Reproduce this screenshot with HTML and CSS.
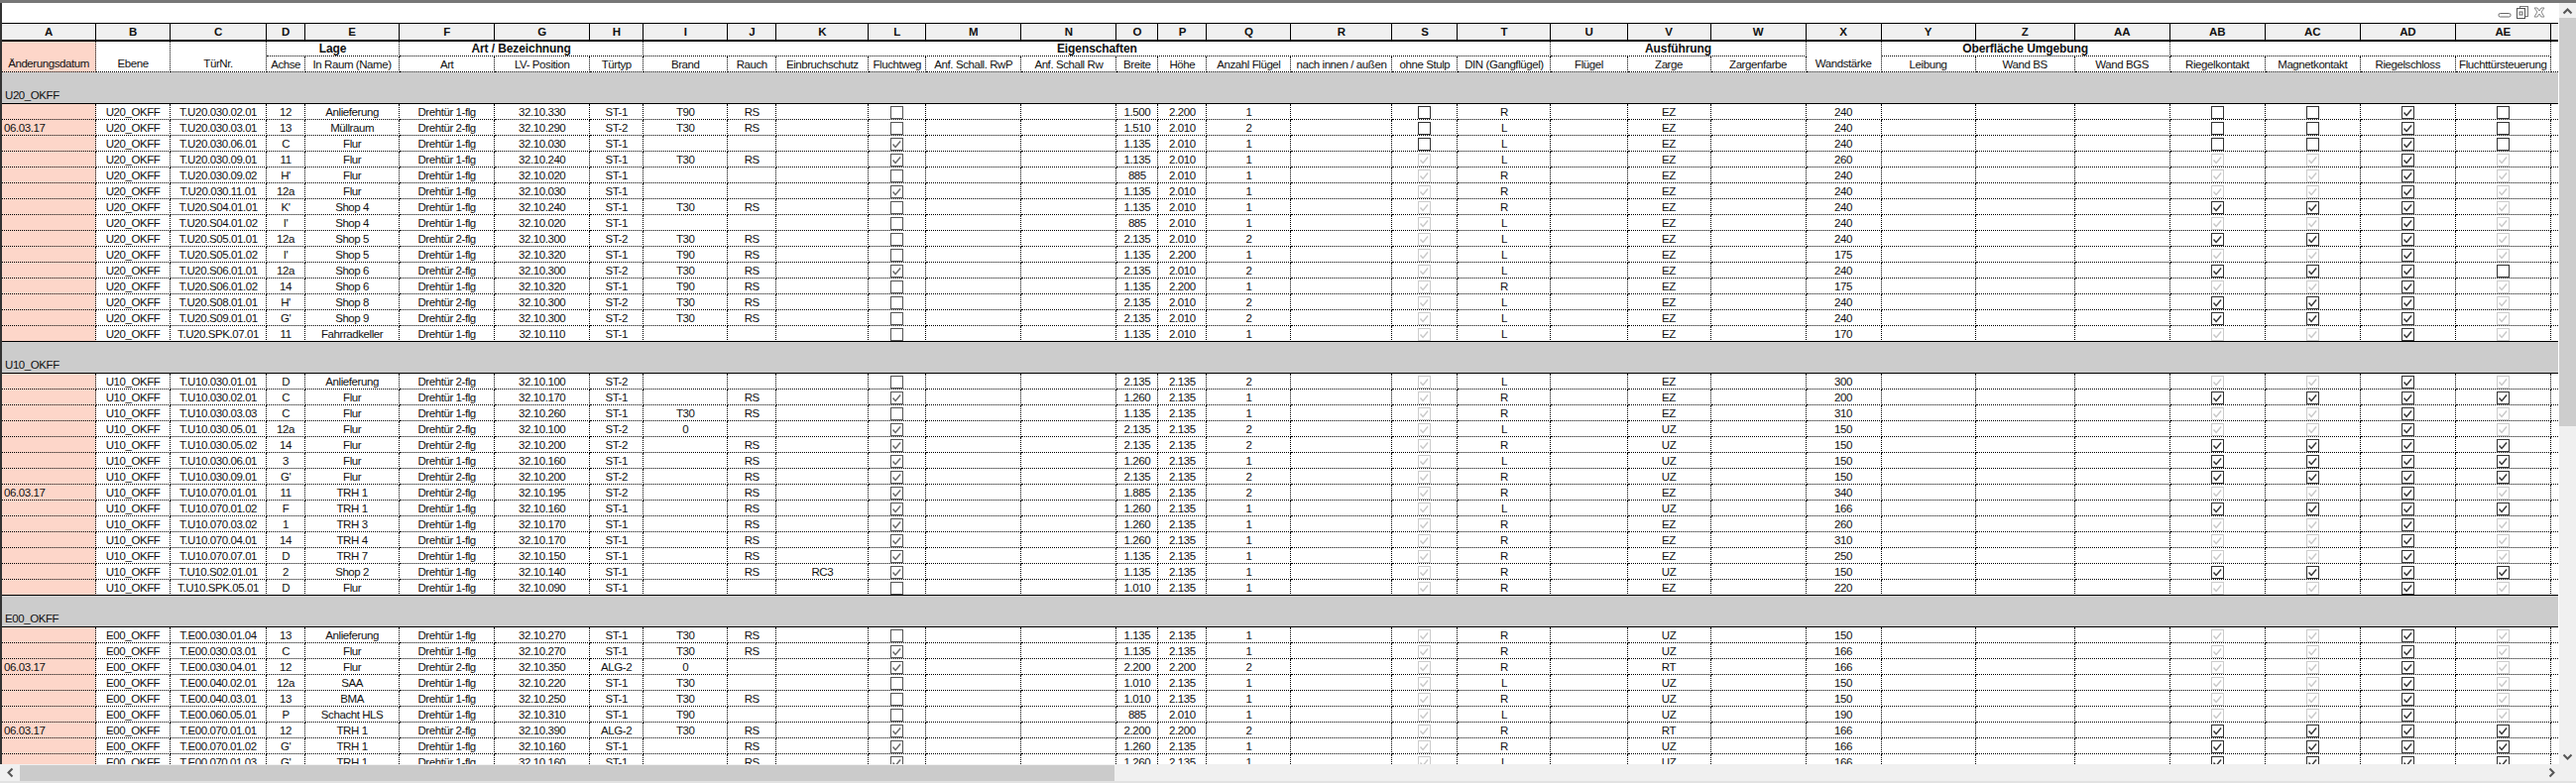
FILE: index.html
```html
<!DOCTYPE html>
<html lang="de">
<head>
<meta charset="utf-8">
<title>Türliste</title>
<link rel="stylesheet" href="styles.css">
</head>
<body>
<div class="window">
  <div class="top">
    <div class="pane">
      <div class="titlebar">
        <svg class="winicons" width="54" height="16" viewBox="0 0 54 16" aria-hidden="true">
          <rect x="1" y="8.5" width="12" height="3.5" rx="1.5" fill="#fff" stroke="#666"/>
          <rect x="22.5" y="1.5" width="8" height="10" fill="#fff" stroke="#777"/>
          <rect x="19.5" y="3.5" width="8" height="10" fill="#fff" stroke="#555"/>
          <rect x="22" y="7" width="3" height="3" fill="none" stroke="#666"/>
          <path d="M37 3l3 0 2 3 2-3 3 0-3 4 3 5-3 0-2-3-2 3-3 0 3-5z" fill="#fff" stroke="#888"/>
        </svg>
      </div>
      <div class="viewport">
        <table class="sheet">
          <colgroup>
            <col><col><col><col><col><col><col><col><col><col><col><col><col><col><col><col>
            <col><col><col><col><col><col><col><col><col><col><col><col><col><col><col><col>
          </colgroup>
          <thead>
            <tr class="letters">
              <th>A</th><th>B</th><th>C</th><th>D</th><th>E</th><th>F</th><th>G</th><th>H</th>
              <th>I</th><th>J</th><th>K</th><th>L</th><th>M</th><th>N</th><th>O</th><th>P</th>
              <th>Q</th><th>R</th><th>S</th><th>T</th><th>U</th><th>V</th><th>W</th><th>X</th>
              <th>Y</th><th>Z</th><th>AA</th><th>AB</th><th>AC</th><th>AD</th><th>AE</th><th class="end"></th>
            </tr>
            <tr class="groups">
              <td rowspan="2" class="date bottom">Änderungsdatum</td>
              <td rowspan="2" class="bottom">Ebene</td>
              <td rowspan="2" class="bottom">TürNr.</td>
              <th colspan="2">Lage</th>
              <th colspan="3">Art / Bezeichnung</th>
              <th colspan="12">Eigenschaften</th>
              <th colspan="3">Ausführung</th>
              <td rowspan="2" class="bottom">Wandstärke</td>
              <th colspan="3">Oberfläche Umgebung</th>
              <th colspan="4"></th>
              <td rowspan="2" class="end"></td>
            </tr>
            <tr class="labels">
              <td>Achse</td><td>In Raum (Name)</td><td>Art</td><td>LV- Position</td><td>Türtyp</td>
              <td>Brand</td><td>Rauch</td><td>Einbruchschutz</td><td>Fluchtweg</td><td>Anf. Schall. RwP</td>
              <td>Anf. Schall Rw</td><td>Breite</td><td>Höhe</td><td>Anzahl Flügel</td><td>nach innen / außen</td>
              <td>ohne Stulp</td><td>DIN (Gangflügel)</td><td>Flügel</td><td>Zarge</td><td>Zargenfarbe</td>
              <td>Leibung</td><td>Wand BS</td><td>Wand BGS</td><td>Riegelkontakt</td><td>Magnetkontakt</td>
              <td>Riegelschloss</td><td>Fluchttürsteuerung</td>
            </tr>
          </thead>
          <tbody id="rows"></tbody>
        </table>
      </div>
    </div>
    <div class="vscroll">
      <div class="vbtn"><svg width="11" height="8" viewBox="0 0 11 8" aria-hidden="true"><path d="M1.5 6.5l4-4 4 4" fill="none" stroke="#555" stroke-width="2"/></svg></div>
      <div class="vthumb"></div>
      <div class="vtrack"></div>
      <div class="vbtn"><svg width="11" height="8" viewBox="0 0 11 8" aria-hidden="true"><path d="M1.5 1.5l4 4 4-4" fill="none" stroke="#555" stroke-width="2"/></svg></div>
    </div>
  </div>
  <div class="hscroll">
    <div class="hbtn"><svg width="8" height="11" viewBox="0 0 8 11" aria-hidden="true"><path d="M6.5 1.5l-4 4 4 4" fill="none" stroke="#555" stroke-width="2"/></svg></div>
    <div class="hthumb"></div>
    <div class="htrack"></div>
    <div class="hbtn"><svg width="8" height="11" viewBox="0 0 8 11" aria-hidden="true"><path d="M1.5 1.5l4 4-4 4" fill="none" stroke="#555" stroke-width="2"/></svg></div>
  </div>
  <div class="foot"></div>
</div>
<script src="app.js"></script>
</body>
</html>
```
FILE: styles.css
```css
* { box-sizing: border-box; }
html, body { margin: 0; padding: 0; background: #fff; }
body { width: 2598px; height: 790px; overflow: hidden; font-family: "Liberation Sans", Arial, sans-serif; color: #111; }
.window { display: flex; flex-direction: column; height: 790px; border-top: 3px solid #777; }
.top { display: flex; height: 768px; }
.pane { width: 2581px; display: flex; flex-direction: column; border-left: 2px solid #333; }
.titlebar { height: 20px; display: flex; justify-content: flex-end; align-items: center; padding-right: 8px; background: #fff; }
.viewport { flex: 1; overflow: hidden; background: #fff; }
.sheet { table-layout: fixed; width: 2578px; border-collapse: separate; border-spacing: 0; font-size: 11.5px; letter-spacing: -0.42px; }
.sheet td, .sheet th { padding: 0; text-align: center; white-space: nowrap; overflow: hidden; border-right: 1px dotted #000; border-bottom: 1px dotted #000; line-height: 14px; font-weight: normal; }
col:nth-child(1) { width: 95px; } col:nth-child(2) { width: 75px; } col:nth-child(3) { width: 97px; }
col:nth-child(4) { width: 39px; } col:nth-child(5) { width: 95px; } col:nth-child(6) { width: 96px; }
col:nth-child(7) { width: 96px; } col:nth-child(8) { width: 54px; } col:nth-child(9) { width: 85px; }
col:nth-child(10) { width: 49px; } col:nth-child(11) { width: 93px; } col:nth-child(12) { width: 58px; }
col:nth-child(13) { width: 96px; } col:nth-child(14) { width: 96px; } col:nth-child(15) { width: 42px; }
col:nth-child(16) { width: 49px; } col:nth-child(17) { width: 85px; } col:nth-child(18) { width: 102px; }
col:nth-child(19) { width: 66px; } col:nth-child(20) { width: 94px; } col:nth-child(21) { width: 77px; }
col:nth-child(22) { width: 84px; } col:nth-child(23) { width: 96px; } col:nth-child(24) { width: 76px; }
col:nth-child(25) { width: 95px; } col:nth-child(26) { width: 100px; } col:nth-child(27) { width: 96px; }
col:nth-child(28) { width: 96px; } col:nth-child(29) { width: 96px; } col:nth-child(30) { width: 96px; }
col:nth-child(31) { width: 96px; } col:nth-child(32) { width: 7px; }
.sheet .letters th { height: 19px; background: #f0f0f0; border-top: 1px solid #000; border-right: 1px solid #000; border-bottom: 2px solid #000; font-weight: bold; font-size: 11.5px; letter-spacing: -0.2px; }
.sheet .letters .end { border-right: 0; }
.sheet .groups th { height: 15px; font-weight: bold; font-size: 12px; letter-spacing: -0.1px; }
.sheet .labels td { height: 16px; }
.sheet .bottom { vertical-align: bottom; padding-bottom: 1px; }
.sheet .end { border-right: 0; }
.sheet .date { background: #fdd6c9; text-align: left; padding-left: 2px; }
.sheet .groups .date { text-align: center; padding-left: 0; }
.sheet tbody td { height: 16px; }
.sheet tbody .band td { height: 32px; background: #ccc; border-right: 0; border-bottom: 1px solid #000; text-align: left; vertical-align: bottom; padding: 0 0 1px 3px; }
.sheet tbody .last td { border-bottom: 1px solid #000; }
.cb { display: block; margin: 1px auto 0; }
.cb rect { fill: #fff; }
.cb path { fill: none; stroke-width: 1.4; }
.dark rect { stroke: #333; }
.dark path { stroke: #333; }
.mid rect { stroke: #555; }
.mid path { stroke: #666; }
.gray rect { stroke: #ccc; }
.gray path { stroke: #c8c8c8; }
.vscroll { width: 17px; display: flex; flex-direction: column; background: #f0f0f0; }
.vbtn { height: 15px; display: flex; align-items: center; justify-content: center; }
.vthumb { height: 412px; background: #cdcdcd; }
.vtrack { flex: 1; }
.hscroll { height: 17px; display: flex; background: #f0f0f0; }
.hbtn { width: 20px; display: flex; align-items: center; justify-content: center; }
.hthumb { width: 1104px; background: #cbcbcb; margin-top: 1px; }
.htrack { flex: 1; }
.hbtn:last-child { width: 36px; justify-content: flex-start; padding-left: 8px; }
.foot { height: 2px; background: #e2e2e2; }
```
FILE: app.js
```js
// date|nr|achse|raum|flg|lv|typ|brand|rauch|rc|breite|hoehe|anzahl|din|zarge|wand|checks (L S AB AC AD AE)
var groups = [
  ["U20_OKFF", [
    "|T.U20.030.02.01|12|Anlieferung|1|330|ST-1|T90|RS||1.500|2.200|1|R|EZ|240|000010",
    "06.03.17|T.U20.030.03.01|13|Müllraum|2|290|ST-2|T30|RS||1.510|2.010|2|L|EZ|240|000010",
    "|T.U20.030.06.01|C|Flur|1|030|ST-1||||1.135|2.010|1|L|EZ|240|100010",
    "|T.U20.030.09.01|11|Flur|1|240|ST-1|T30|RS||1.135|2.010|1|L|EZ|260|1ggg1g",
    "|T.U20.030.09.02|H'|Flur|1|020|ST-1||||885|2.010|1|R|EZ|240|0ggg1g",
    "|T.U20.030.11.01|12a|Flur|1|030|ST-1||||1.135|2.010|1|R|EZ|240|1ggg1g",
    "|T.U20.S04.01.01|K'|Shop 4|1|240|ST-1|T30|RS||1.135|2.010|1|R|EZ|240|0g111g",
    "|T.U20.S04.01.02|I'|Shop 4|1|020|ST-1||||885|2.010|1|L|EZ|240|0ggg1g",
    "|T.U20.S05.01.01|12a|Shop 5|2|300|ST-2|T30|RS||2.135|2.010|2|L|EZ|240|0g111g",
    "|T.U20.S05.01.02|I'|Shop 5|1|320|ST-1|T90|RS||1.135|2.200|1|L|EZ|175|0ggg1g",
    "|T.U20.S06.01.01|12a|Shop 6|2|300|ST-2|T30|RS||2.135|2.010|2|L|EZ|240|1g1110",
    "|T.U20.S06.01.02|14|Shop 6|1|320|ST-1|T90|RS||1.135|2.200|1|R|EZ|175|0ggg1g",
    "|T.U20.S08.01.01|H'|Shop 8|2|300|ST-2|T30|RS||2.135|2.010|2|L|EZ|240|0g111g",
    "|T.U20.S09.01.01|G'|Shop 9|2|300|ST-2|T30|RS||2.135|2.010|2|L|EZ|240|0g111g",
    "|T.U20.SPK.07.01|11|Fahrradkeller|1|110|ST-1||||1.135|2.010|1|L|EZ|170|0ggg1g"
  ]],
  ["U10_OKFF", [
    "|T.U10.030.01.01|D|Anlieferung|2|100|ST-2||||2.135|2.135|2|L|EZ|300|0ggg1g",
    "|T.U10.030.02.01|C|Flur|1|170|ST-1||RS||1.260|2.135|1|R|EZ|200|1g1111",
    "|T.U10.030.03.03|C|Flur|1|260|ST-1|T30|RS||1.135|2.135|1|R|EZ|310|0ggg1g",
    "|T.U10.030.05.01|12a|Flur|2|100|ST-2|0|||2.135|2.135|2|L|UZ|150|1ggg1g",
    "|T.U10.030.05.02|14|Flur|2|200|ST-2||RS||2.135|2.135|2|R|UZ|150|1g1111",
    "|T.U10.030.06.01|3|Flur|1|160|ST-1||RS||1.260|2.135|1|L|UZ|150|1g1111",
    "|T.U10.030.09.01|G'|Flur|2|200|ST-2||RS||2.135|2.135|2|R|UZ|150|1g1111",
    "06.03.17|T.U10.070.01.01|11|TRH 1|2|195|ST-2||RS||1.885|2.135|2|R|EZ|340|1ggg1g",
    "|T.U10.070.01.02|F|TRH 1|1|160|ST-1||RS||1.260|2.135|1|L|UZ|166|1g1111",
    "|T.U10.070.03.02|1|TRH 3|1|170|ST-1||RS||1.260|2.135|1|R|EZ|260|1ggg1g",
    "|T.U10.070.04.01|14|TRH 4|1|170|ST-1||RS||1.260|2.135|1|R|EZ|310|1ggg1g",
    "|T.U10.070.07.01|D|TRH 7|1|150|ST-1||RS||1.135|2.135|1|R|EZ|250|1ggg1g",
    "|T.U10.S02.01.01|2|Shop 2|1|140|ST-1||RS|RC3|1.135|2.135|1|R|UZ|150|1g1111",
    "|T.U10.SPK.05.01|D|Flur|1|090|ST-1||||1.010|2.135|1|R|EZ|220|0ggg1g"
  ]],
  ["E00_OKFF", [
    "|T.E00.030.01.04|13|Anlieferung|1|270|ST-1|T30|RS||1.135|2.135|1|R|UZ|150|0ggg1g",
    "|T.E00.030.03.01|C|Flur|1|270|ST-1|T30|RS||1.135|2.135|1|R|UZ|166|1ggg1g",
    "06.03.17|T.E00.030.04.01|12|Flur|2|350|ALG-2|0|||2.200|2.200|2|R|RT|166|1ggg1g",
    "|T.E00.040.02.01|12a|SAA|1|220|ST-1|T30|||1.010|2.135|1|L|UZ|150|0ggg1g",
    "|T.E00.040.03.01|13|BMA|1|250|ST-1|T30|RS||1.010|2.135|1|R|UZ|150|0ggg1g",
    "|T.E00.060.05.01|P|Schacht HLS|1|310|ST-1|T90|||885|2.010|1|L|UZ|190|0ggg1g",
    "06.03.17|T.E00.070.01.01|12|TRH 1|2|390|ALG-2|T30|RS||2.200|2.200|2|R|RT|166|1g1111",
    "|T.E00.070.01.02|G'|TRH 1|1|160|ST-1||RS||1.260|2.135|1|R|UZ|166|1g1111",
    "|T.E00.070.01.03|G'|TRH 1|1|160|ST-1||RS||1.260|2.135|1|L|UZ|166|1g1111"
  ]]
];

function box(state, tone) {
  var tick = state === "0" ? "" : '<path d="M2.5 6.5l2.6 3 5-6"/>';
  var cls = state === "g" ? "gray" : tone;
  return '<svg class="cb ' + cls + '" width="13" height="13" viewBox="0 0 13 13"><rect x="0.5" y="0.5" width="12" height="12"/>' + tick + "</svg>";
}

var html = "";
groups.forEach(function (g, gi) {
  html += '<tr class="band"><td colspan="32">' + g[0] + "</td></tr>";
  g[1].forEach(function (line, i) {
    var f = line.split("|");
    var c = f[16];
    var last = gi < groups.length - 1 && i === g[1].length - 1;
    var cells = [
      f[0], g[0], f[1], f[2], f[3], "Drehtür " + f[4] + "-flg", "32.10." + f[5], f[6], f[7], f[8], f[9],
      box(c[0], "mid"), "", "", f[10], f[11], f[12], "",
      box(c[1], "dark"), f[13], "", f[14], "", f[15], "", "", "",
      box(c[2], "dark"), box(c[3], "dark"), box(c[4], "dark"), box(c[5], "dark"), ""
    ];
    html += '<tr' + (last ? ' class="last"' : "") + ">";
    cells.forEach(function (v, k) {
      var cls = k === 0 ? "date" : k === 31 ? "end" : "";
      html += "<td" + (cls ? ' class="' + cls + '"' : "") + ">" + v + "</td>";
    });
    html += "</tr>";
  });
});
document.getElementById("rows").innerHTML = html;
```
